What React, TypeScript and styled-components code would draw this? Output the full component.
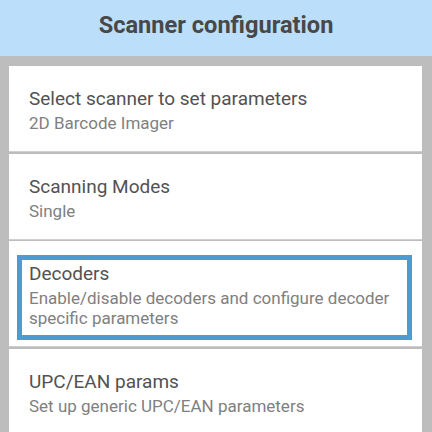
import React from "react";
import styled, { createGlobalStyle } from "styled-components";

const GlobalStyle = createGlobalStyle`
  html, body {
    margin: 0;
    padding: 0;
    background: #bdbdbd;
    font-family: Roboto, "Liberation Sans", Arial, sans-serif;
  }
`;

const Page = styled.div`
  width: 432px;
  height: 432px;
  overflow: hidden;
  background: #bdbdbd;
`;

const Header = styled.header`
  height: 56px;
  box-sizing: border-box;
  padding-bottom: 7px;
  background: #bbdefb;
  display: flex;
  align-items: center;
  justify-content: center;
`;

const HeaderTitle = styled.h1`
  margin: 0;
  font-size: 23.6px;
  font-weight: 700;
  color: #484848;
`;

const List = styled.div`
  display: flex;
  flex-direction: column;
  gap: 2.5px;
  padding: 10px 10px 0 9px;
`;

const Item = styled.div`
  position: relative;
  background: #ffffff;
  padding: 21px 20px 18px 20px;
  box-shadow: 0 1px 0 #cfcfcf;
`;

// focus highlight drawn over the selected preference row
const FocusRing = styled.div`
  position: absolute;
  top: 14px;
  left: 8px;
  right: 10px;
  bottom: 6px;
  border: 5px solid #4b9cd3;
  pointer-events: none;
`;

const Title = styled.div`
  font-size: 19px;
  line-height: 24px;
  color: #525252;
`;

const Summary = styled.div`
  margin-top: 2px;
  font-size: 17px;
  line-height: 20px;
  color: #808080;
`;

type Setting = {
  title: string;
  summary: string;
  focused?: boolean;
};

const settings: Setting[] = [
  { title: "Select scanner to set parameters", summary: "2D Barcode Imager" },
  { title: "Scanning Modes", summary: "Single" },
  {
    title: "Decoders",
    summary: "Enable/disable decoders and configure decoder specific parameters",
    focused: true,
  },
  { title: "UPC/EAN params", summary: "Set up generic UPC/EAN parameters" },
];

const App = () => {
  return (
    <Page>
      <GlobalStyle />
      <Header>
        <HeaderTitle>Scanner configuration</HeaderTitle>
      </Header>
      <List>
        {settings.map((s) => (
          <Item key={s.title}>
            {s.focused && <FocusRing />}
            <Title>{s.title}</Title>
            <Summary>{s.summary}</Summary>
          </Item>
        ))}
      </List>
    </Page>
  );
};

export default App;
